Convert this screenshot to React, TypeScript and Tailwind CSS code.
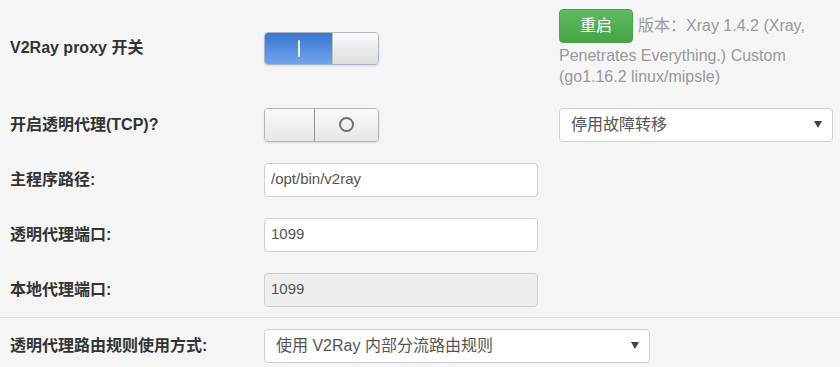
import type { ReactNode } from 'react'

const font = 'font-["Liberation_Sans","Noto_Sans_CJK_SC",sans-serif]'

// Bootstrap-switch style toggle
function Switch({ on }: { on: boolean }) {
  if (on) {
    return (
      <div className="flex w-[115px] h-[33px] rounded-[4px] border border-[#a9b6c8] overflow-hidden shadow-[0_1px_2px_rgba(0,0,0,0.12)]">
        <div className="w-[67px] bg-linear-to-b from-[#3a77d1] to-[#70a3eb] flex items-center justify-center">
          <span className="block w-[2px] h-[17px] bg-[#e6f0ff] rounded-sm" />
        </div>
        <div className="flex-1 bg-linear-to-b from-[#fbfbfb] to-[#dedede] border-l border-[#c2c2c2]" />
      </div>
    )
  }
  return (
    <div className="flex w-[115px] h-[34px] rounded-[4px] border border-[#b3b3b3] overflow-hidden shadow-[0_1px_2px_rgba(0,0,0,0.12)]">
      <div className="w-[49px] bg-linear-to-b from-[#fbfbfb] to-[#e6e6e6]" />
      <div className="flex-1 bg-linear-to-b from-[#fbfbfb] to-[#e6e6e6] border-l border-[#8f8f8f] flex items-center justify-center">
        <span className="block w-[15px] h-[15px] rounded-full border-2 border-[#707070]" />
      </div>
    </div>
  )
}

function Caret() {
  return (
    <svg width="8" height="7" viewBox="0 0 8 7" className="shrink-0">
      <path d="M0 0 L8 0 L4 7 Z" fill="#444" />
    </svg>
  )
}

function SelectBox({ value, width }: { value: string; width: string }) {
  return (
    <div
      className={`${width} h-[34px] bg-white border border-[#cfcfcf] rounded-[4px] flex items-center justify-between pl-[11px] pr-[10px] text-[16px] text-[#555]`}
    >
      <span>{value}</span>
      <Caret />
    </div>
  )
}

function TextInput({ value, disabled }: { value: string; disabled?: boolean }) {
  return (
    <div
      className={`w-[274px] h-[34px] border border-[#cfcfcf] rounded-[4px] flex items-center pl-[6px] text-[15px] text-[#555] ${
        disabled ? 'bg-[#eeeeee]' : 'bg-white'
      }`}
    >
      {value}
    </div>
  )
}

function Row({
  label,
  control,
  extra,
  className = '',
}: {
  label: string
  control: ReactNode
  extra?: ReactNode
  className?: string
}) {
  return (
    <div className={`flex items-center min-h-[55px] ${className}`}>
      <div className="w-[264px] pl-[10px] font-bold text-[16px] text-[#333]">{label}</div>
      <div className="w-[295px] flex">{control}</div>
      <div className="flex-1 pr-[7px]">{extra}</div>
    </div>
  )
}

export default function App() {
  return (
    <div className={`w-[840px] h-[367px] overflow-hidden bg-[#f5f5f5] ${font}`}>
      <Row
        className="pt-[9px] pb-[10px]"
        label="V2Ray proxy 开关"
        control={<Switch on />}
        extra={
          <div className="text-[16px] leading-[21px] text-[#999]">
            <button className="inline-block align-middle w-[74px] h-[34px] mb-[2px] mr-[5px] rounded-[4px] border border-[#4aa84a] bg-linear-to-b from-[#5fbb5f] to-[#45a345] text-white text-[16px] leading-[32px]">
              重启
            </button>
            <span>版本：Xray 1.4.2 (Xray,</span> <span>Penetrates Everything.) Custom (go1.16.2 linux/mipsle)</span>
          </div>
        }
      />
      <Row
        label="开启透明代理(TCP)?"
        control={<Switch on={false} />}
        extra={<SelectBox value="停用故障转移" width="w-[274px]" />}
      />
      <Row label="主程序路径:" control={<TextInput value="/opt/bin/v2ray" />} />
      <Row label="透明代理端口:" control={<TextInput value="1099" />} />
      <Row label="本地代理端口:" control={<TextInput value="1099" disabled />} />
      <div className="border-t border-[#dddddd]">
        <div className="flex items-center min-h-[55px]">
          <div className="w-[264px] pl-[10px] font-bold text-[16px] text-[#333]">透明代理路由规则使用方式:</div>
          <SelectBox value="使用 V2Ray 内部分流路由规则" width="w-[386px]" />
        </div>
      </div>
    </div>
  )
}
